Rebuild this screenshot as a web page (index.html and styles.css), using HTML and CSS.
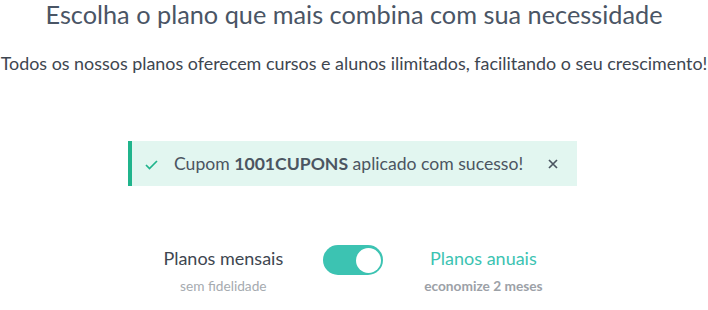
FILE: index.html
```html
<!DOCTYPE html>
<html lang="pt">
<head>
<meta charset="utf-8">
<link rel="stylesheet" href="styles.css">
</head>
<body>
<div class="page">
  <h1 class="title">Escolha o plano que mais combina com sua necessidade</h1>
  <p class="subtitle">Todos os nossos planos oferecem cursos e alunos ilimitados, facilitando o seu crescimento!</p>
  <div class="alert-wrap">
    <div class="alert">
      <svg class="check" width="13" height="10" viewBox="0 0 13 10"><path d="M1 5 L4.5 8.5 L12 1" fill="none" stroke="#20b48c" stroke-width="1.7"/></svg>
      <span class="alert-text">Cupom <b>1001CUPONS</b> aplicado com sucesso!</span>
      <svg class="close" width="10" height="10" viewBox="0 0 10 10"><path d="M1 1 L9 9 M9 1 L1 9" stroke="#4b5561" stroke-width="1.7"/></svg>
    </div>
  </div>
  <div class="plans">
    <div class="plan plan-month">
      <div class="plan-name">Planos mensais</div>
      <div class="plan-note">sem fidelidade</div>
    </div>
    <div class="toggle"><span class="knob"></span></div>
    <div class="plan plan-year">
      <div class="plan-name active">Planos anuais</div>
      <div class="plan-note bold">economize 2 meses</div>
    </div>
  </div>
</div>
</body>
</html>
```
FILE: styles.css
```css
html, body { margin: 0; padding: 0; background: #fff; }
body { font-family: Lato, "Open Sans", sans-serif; color: #4b5561; width: 708px; height: 310px; overflow: hidden; }
.page { display: flex; flex-direction: column; align-items: center; }
.title { margin: 0; padding-top: 0; font-size: 25.3px; font-weight: 400; line-height: 28px; color: #4a5565; white-space: nowrap; }
.subtitle { margin: 24px 0 0; font-size: 17.9px; line-height: 22px; color: #3e4650; white-space: nowrap; }
.alert-wrap { margin-top: 67px; margin-right: 3px; }
.alert { width: 449px; height: 45px; box-sizing: border-box; background: #e2f6f0; border-left: 4px solid #20b48c; display: flex; align-items: center; padding-left: 13px; }
.check { margin-right: 16px; margin-top: 2px; }
.alert-text { font-size: 17.6px; color: #4b5561; }
.alert-text b { font-weight: 700; }
.close { margin-left: 25px; margin-top: 1px; }
.plans { margin-top: 59px; display: flex; align-items: flex-start; margin-right: 2px; }
.plan { display: flex; flex-direction: column; align-items: center; }
.plan-name { font-size: 18px; line-height: 22px; color: #3e4650; margin-top: 2px; }
.plan-name.active { color: #3cc3b2; }
.plan-note { margin-top: 8px; font-size: 13.7px; color: #a6abb0; }
.plan-note.bold { font-weight: 700; color: #9ca1a7; }
.toggle { width: 60px; height: 30px; border-radius: 15px; background: #3cc3b2; margin: 0 41px 0 40px; position: relative; flex: none; }
.knob { position: absolute; right: 2px; top: 2.5px; width: 25px; height: 25px; border-radius: 50%; background: #fff; }
```
